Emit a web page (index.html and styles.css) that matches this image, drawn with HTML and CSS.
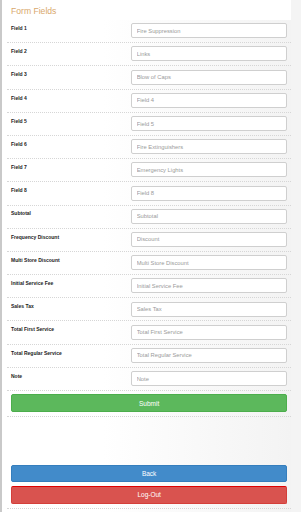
FILE: index.html
```html
<!DOCTYPE html>
<html>
<head>
<meta charset="utf-8">
<link rel="stylesheet" href="styles.css">
</head>
<body>
<div class="page">
  <div class="header">Form Fields</div>
  <div class="form">
    <div class="row"><label class="lbl">Field 1</label><input class="inp" placeholder="Fire Suppression"></div>
    <div class="row"><label class="lbl">Field 2</label><input class="inp" placeholder="Links"></div>
    <div class="row"><label class="lbl">Field 3</label><input class="inp" placeholder="Blow of Caps"></div>
    <div class="row"><label class="lbl">Field 4</label><input class="inp" placeholder="Field 4"></div>
    <div class="row"><label class="lbl">Field 5</label><input class="inp" placeholder="Field 5"></div>
    <div class="row"><label class="lbl">Field 6</label><input class="inp" placeholder="Fire Extinguishers"></div>
    <div class="row"><label class="lbl">Field 7</label><input class="inp" placeholder="Emergency Lights"></div>
    <div class="row"><label class="lbl">Field 8</label><input class="inp" placeholder="Field 8"></div>
    <div class="row"><label class="lbl">Subtotal</label><input class="inp" placeholder="Subtotal"></div>
    <div class="row"><label class="lbl">Frequency Discount</label><input class="inp" placeholder="Discount"></div>
    <div class="row"><label class="lbl">Multi Store Discount</label><input class="inp" placeholder="Multi Store Discount"></div>
    <div class="row"><label class="lbl">Initial Service Fee</label><input class="inp" placeholder="Initial Service Fee"></div>
    <div class="row"><label class="lbl">Sales Tax</label><input class="inp" placeholder="Sales Tax"></div>
    <div class="row"><label class="lbl">Total First Service</label><input class="inp" placeholder="Total First Service"></div>
    <div class="row"><label class="lbl">Total Regular Service</label><input class="inp" placeholder="Total Regular Service"></div>
    <div class="row"><label class="lbl">Note</label><input class="inp" placeholder="Note"></div>
    <div class="row btnrow submitrow"><button class="btn btn-green">Submit</button></div>
    <div class="row btnrow bottomrow">
      <button class="btn btn-blue">Back</button>
      <button class="btn btn-red">Log-Out</button>
    </div>
  </div>
</div>
</body>
</html>
```
FILE: styles.css
```css
html, body {
  margin: 0;
  padding: 0;
}
body {
  background: #f4f4f4;
  font-family: "Liberation Sans", Arial, sans-serif;
  width: 301px;
  height: 512px;
  overflow: hidden;
}
.page {
  width: 291px;
  box-sizing: border-box;
  border-left: 2px solid #c9c9c9;
  padding-left: 5px;
  background: linear-gradient(to right, #ffffff 35%, #f3f3f3 100%);
  height: 512px;
}
.header {
  height: 20px;
  box-sizing: border-box;
  margin-left: -5px;
  padding: 5.5px 0 0 9px;
  font-size: 8.6px;
  line-height: 10px;
  color: #d9a86c;
  background: #fff;
}
.form {
  display: flex;
  flex-direction: column;
}
.row {
  display: flex;
  align-items: flex-start;
  padding: 3.3px 3.7px 3.9px 4px;
  border-bottom: 1px dotted #d6d6d6;
}
.lbl {
  width: 120.3px;
  flex: none;
  margin-top: 1.7px;
  font-size: 5px;
  line-height: 6px;
  font-weight: bold;
  color: #222;
}
.inp {
  flex: 1;
  min-width: 0;
  height: 15px;
  box-sizing: border-box;
  margin: 0;
  padding: 0 0 0 4.4px;
  border: 1px solid #cfcfcf;
  border-radius: 2px;
  background: #fff;
  font-family: "Liberation Sans", Arial, sans-serif;
  font-size: 5.8px;
  color: #555;
  outline: none;
}
.inp::placeholder {
  color: #9a9a9a;
}
.btnrow {
  flex-direction: column;
  align-items: stretch;
}
.submitrow {
  padding-top: 2.8px;
  padding-bottom: 4px;
}
.bottomrow {
  margin-top: 47.3px;
  padding-top: 0;
  padding-bottom: 4px;
  gap: 3.3px;
}
.btn {
  display: block;
  width: 100%;
  height: 18px;
  margin: 0;
  padding: 0;
  box-sizing: border-box;
  border-radius: 2px;
  font-family: "Liberation Sans", Arial, sans-serif;
  font-size: 6.5px;
  color: #fff;
  text-align: center;
}
.btn-green {
  height: 18.7px;
  background: #5cb85c;
  border: 1px solid #4cae4c;
}
.btn-blue {
  height: 17.7px;
  background: #428bca;
  border: 1px solid #357ebd;
}
.btn-red {
  background: #d9534f;
  border: 1px solid #d43f3a;
  border-top-color: #e00000;
}
```
